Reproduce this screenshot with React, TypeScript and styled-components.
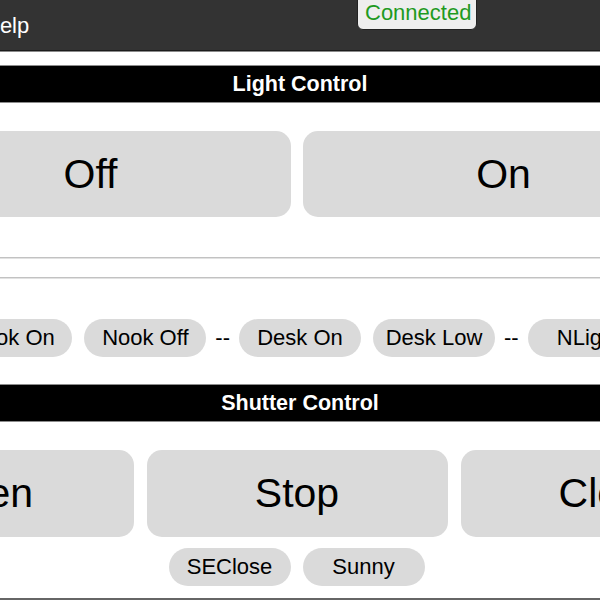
import styled, { createGlobalStyle } from 'styled-components';

const GlobalStyle = createGlobalStyle`
  html, body {
    margin: 0;
    padding: 0;
    background: #fff;
  }
  body {
    font-family: 'Liberation Sans', Arial, sans-serif;
    color: #000;
  }
`;

const lightPills: (string | null)[] = ['Nook On', 'Nook Off', null, 'Desk On', 'Desk Low', null, 'NLight'];
const weatherPills = ['SEClose', 'Sunny'];

function App() {
  return (
    <>
      <GlobalStyle />
      <Page>
        <Header>
          <MenuItem>Help</MenuItem>
          <Status>Connected</Status>
        </Header>

        <SectionTitle $top={14}>Light Control</SectionTitle>
        <BigRow $top={28}>
          <BigButton $width={401} $height={86}>Off</BigButton>
          <BigButton $width={401} $height={86}>On</BigButton>
        </BigRow>
        <Rule $top={40} />
        <Rule $top={18} />
        <PillRow $top={40}>
          {lightPills.map((label, i) =>
            label ? <Pill key={i}>{label}</Pill> : <Sep key={i}>--</Sep>
          )}
        </PillRow>

        <SectionTitle $top={27}>Shutter Control</SectionTitle>
        <BigRow $top={28} $gap={13}>
          <BigButton $width={301}>Open</BigButton>
          <BigButton $width={301}>Stop</BigButton>
          <BigButton $width={301}>Close</BigButton>
        </BigRow>
        <PillRow $top={11} $width={593}>
          {weatherPills.map((label) => (
            <Pill key={label}>{label}</Pill>
          ))}
        </PillRow>
        <Footer />
      </Page>
    </>
  );
}

export default App;

const Page = styled.div`
  width: 600px;
  height: 600px;
  overflow: hidden;
  display: flex;
  flex-direction: column;
`;

const Header = styled.div`
  position: relative;
  flex-shrink: 0;
  height: 50px;
  background: #333;
  border-bottom: 1px solid #1c1c1c;
  box-shadow: 0 1px 0 #8a8a8a;
  display: flex;
  align-items: center;
`;

const MenuItem = styled.span`
  margin-left: -16px;
  margin-top: 2px;
  color: #fff;
  font-size: 22px;
`;

const Status = styled.div`
  position: absolute;
  left: 357px;
  top: -10px;
  width: 104px;
  padding: 9px 7px 3px;
  background: #eee;
  border: 1px solid #222;
  border-radius: 6px;
  color: #1f9a1f;
  font-size: 22px;
  line-height: 26px;
  text-align: center;
`;

const SectionTitle = styled.div<{ $top: number }>`
  flex-shrink: 0;
  margin-top: ${({ $top }) => $top}px;
  height: 36px;
  background: #000;
  border-top: 1px solid #8c8c8c;
  border-bottom: 1px solid #8c8c8c;
  color: #fff;
  font-weight: bold;
  font-size: 21.5px;
  display: flex;
  align-items: center;
  justify-content: center;
`;

const BigRow = styled.div<{ $top: number; $gap?: number }>`
  flex-shrink: 0;
  margin-top: ${({ $top }) => $top}px;
  width: 594px;
  display: flex;
  justify-content: center;
  gap: ${({ $gap }) => $gap ?? 12}px;
`;

const BigButton = styled.div<{ $width: number; $height?: number }>`
  flex-shrink: 0;
  width: ${({ $width }) => $width}px;
  height: ${({ $height }) => $height ?? 87}px;
  background: #dadada;
  border-radius: 15px;
  font-size: 41px;
  display: flex;
  align-items: center;
  justify-content: center;
`;

const Rule = styled.div<{ $top: number }>`
  flex-shrink: 0;
  margin-top: ${({ $top }) => $top}px;
  border-top: 1px solid #c2c2c2;
  border-bottom: 1px solid #e2e2e2;
`;

const PillRow = styled.div<{ $top: number; $width?: number }>`
  flex-shrink: 0;
  margin-top: ${({ $top }) => $top}px;
  width: ${({ $width }) => $width ?? 600}px;
  display: flex;
  justify-content: center;
  align-items: center;
  gap: 12px;
`;

const Pill = styled.div`
  flex-shrink: 0;
  width: 122px;
  height: 38px;
  background: #dadada;
  border-radius: 19px;
  font-size: 22px;
  display: flex;
  align-items: center;
  justify-content: center;
`;

const Sep = styled.span`
  flex-shrink: 0;
  margin: 0 -3px;
  font-size: 22px;
`;

const Footer = styled.div`
  flex-shrink: 0;
  margin-top: 12px;
  border-top: 2px solid #666;
`;
